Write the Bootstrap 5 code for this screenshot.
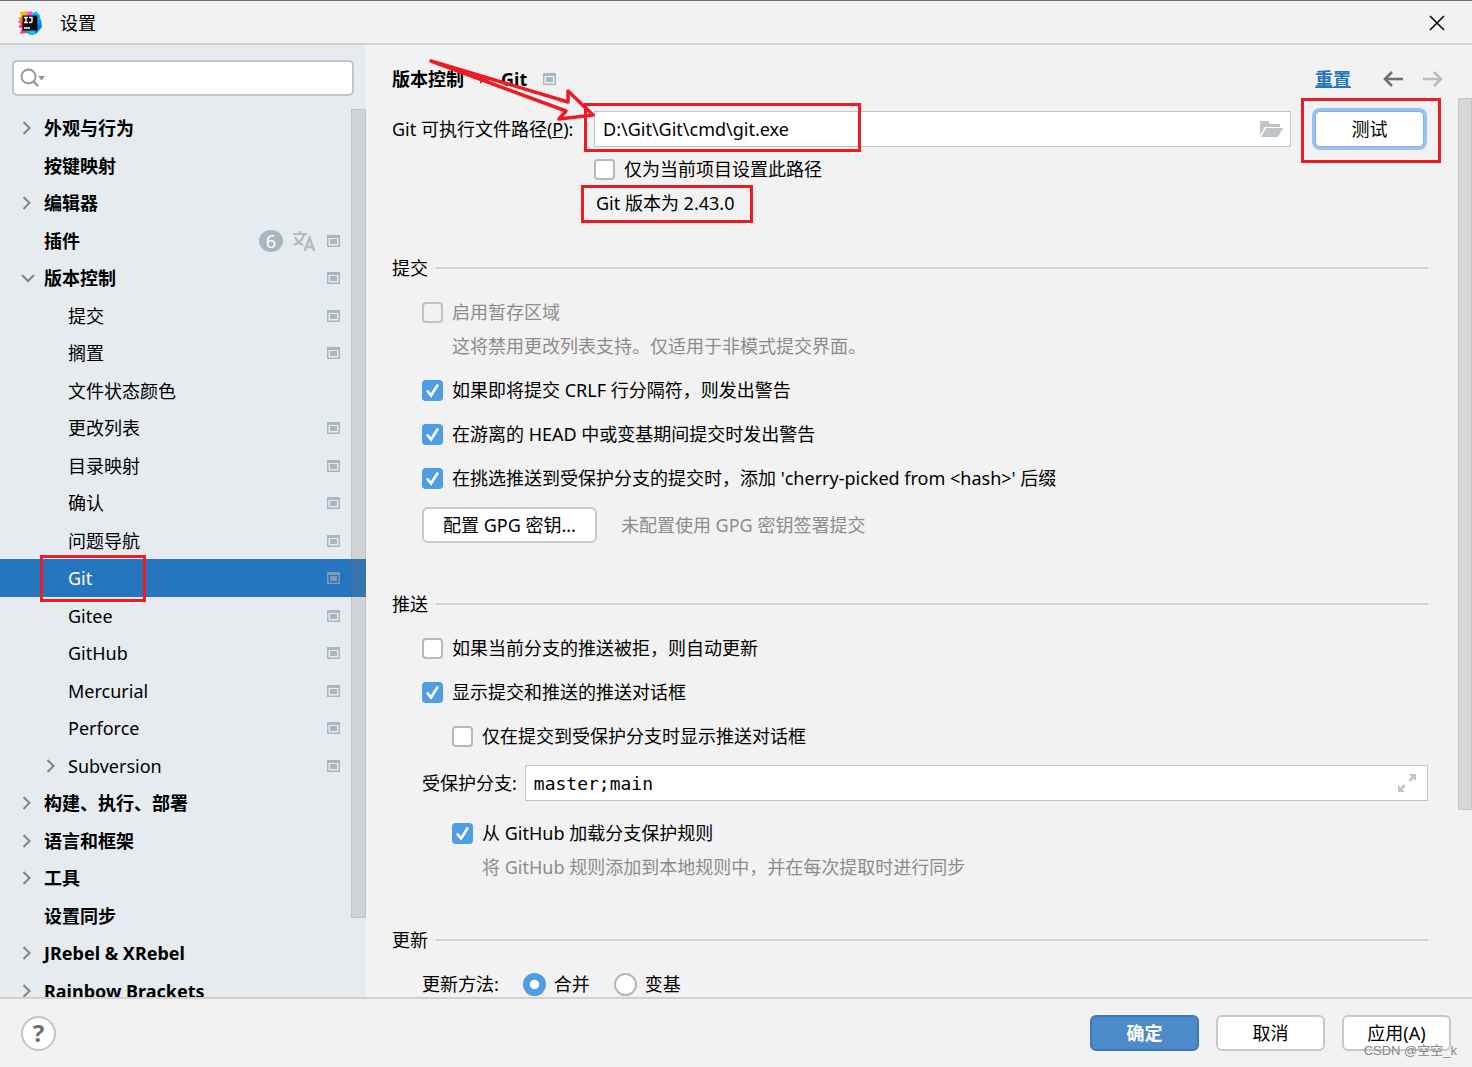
<!DOCTYPE html>
<html lang="zh-CN">
<head>
<meta charset="utf-8">
<meta name="viewport" content="width=device-width, initial-scale=1">
<title>设置</title>
<link href="https://cdn.jsdelivr.net/npm/bootstrap@5.3.0/dist/css/bootstrap.min.css" rel="stylesheet">
<style>
  body { background: #f2f2f2; color: #000; font-family: "Noto Sans", "Noto Sans CJK SC", sans-serif; font-size: 18px; line-height: 24px; }
  .title-bar { height: 45px; border-top: 1px solid #6b6b6b; border-bottom: 2px solid #d1d1d1; padding: 2px 26px 0 18px; gap: 18px; }
  .close-btn { line-height: 0; }
  .side-pane { width: 366px; background: #e6ebef; }
  .search-wrap { padding: 15px 12px 13px; }
  .search-wrap .form-control { height: 36px; border: 2px solid #c4c4c4; border-radius: 5px; padding-left: 44px; }
  .search-icon { left: 20px; top: 22px; }
  .tree-list { min-height: 900px; }
  .tree-list li { flex: 1 1 0; }
  .tree-item { padding: 1px 26px 0 19px; color: #000; }
  .tree-item .arrow-slot { width: 25px; line-height: 0; flex: none; }
  .tree-item.level-two { padding-left: 43px; }
  .tree-item.top-level { font-weight: 700; }
  .tree-item.selected { background: #2675bf; color: #fff; }
  .selected .proj-icon { color: #7d9bb8; }
  .proj-icon { width: 13px; height: 12px; color: #a9b6be; flex: none; }
  .update-count { width: 24px; height: 22px; border-radius: 50%; background: #a9b6be; color: #fff; font-weight: 400; line-height: 22px; }
  .scroll-thumb { position: absolute; background: rgba(115, 115, 115, .2); border: 1px solid rgba(90, 90, 90, .12); }
  .side-thumb { top: 64px; right: 0; width: 15px; height: 809px; }
  .page-thumb { top: 53px; right: 0; width: 14px; height: 712px; }
  .page-pane { padding: 0 44px 0 26px; }
  .page-head { height: 66px; margin-right: -15px; padding-top: 2px; }
  .reset-link { color: #2675bf; font-weight: 700; }
  .label-col { width: 202px; flex: none; white-space: nowrap; }
  .field { height: 36px; border: 1px solid #c4c4c4; border-radius: 0; padding: 0 8px; font-size: 18px; color: #000; }
  .field-mono { font-family: "DejaVu Sans Mono", monospace; }
  .field-icon { position: absolute; top: 9px; right: 8px; line-height: 0; }
  .tool-btn { min-width: 109px; height: 36px; border: 2px solid #c8c8c8; border-radius: 6px; background: #fff; color: #000; font-size: 18px; line-height: 24px; padding: 0 19px; }
  .tool-btn.is-default { background: #4d8ac9; border-color: #3f78b5; color: #fff; font-weight: 700; }
  .tool-btn.is-focused { border: 1px solid #87afda; box-shadow: 0 0 0 3px #97c3f3; border-radius: 5px; }
  .test-col { padding: 0 4px 0 24px; }
  .section-title { margin-top: 49px; gap: 8px; }
  .section-title.first { margin-top: 41px; }
  .section-title hr { height: 2px; margin: 0; border: 0; background: #d1d1d1; opacity: 1; }
  .opt { display: flex; align-items: center; gap: 9px; margin-top: 20px; }
  .opt .form-check-input { width: 21px; height: 21px; margin: 0; border: 2px solid #b8b8b8; background-color: #fff; flex: none; }
  .opt .form-check-input[type=checkbox] { border-radius: 4px; }
  .opt .form-check-input:checked { background-color: #4f9de3; border-color: #4f9de3; }
  .opt .form-check-input[type=checkbox]:checked { border-width: 0; background-image: url("data:image/svg+xml,%3csvg xmlns='http://www.w3.org/2000/svg' viewBox='0 0 21 21'%3e%3cpath d='M5 10.500l4 5 7-11' fill='none' stroke='%23fff' stroke-width='2.600'/%3e%3c/svg%3e"); }
  .opt .form-check-input:disabled { background-color: #f2f2f2; opacity: .8; }
  .opt .form-check-input[type=radio] { width: 23px; height: 23px; }
  .opt .form-check-input:disabled ~ label { opacity: 1; }
  .radio-row { gap: 8px; }
  .tight { margin-top: 10px; }
  .control-row { margin-top: 17px; }
  .group-body { padding-left: 30px; }
  .sub-level { padding-left: 30px; }
  .dim { color: #8c8c8c; }
  .version-note { padding-left: 2px; }
  .foot-bar { height: 70px; border-top: 2px solid #d1d1d1; padding: 0 21px; gap: 17px; }
  .help-btn { width: 35px; height: 35px; border: 2px solid #c4c4c4; border-radius: 50%; background: #fff; color: #6e6e6e; font-weight: 700; font-size: 24px; line-height: 30px; padding: 0; }
  .watermark { position: absolute; right: 15px; bottom: 6px; font-size: 13px; line-height: 20px; color: #888; font-family: "Liberation Sans", "Noto Sans CJK SC", sans-serif; }
  /* red annotations drawn over the dialog */
  .red-box { position: absolute; border: 3px solid #ed1c24; pointer-events: none; z-index: 3; }
  .box-tree { left: 40px; top: -4px; width: 106px; height: 47px; }
  .box-path { left: -10px; top: -8px; width: 277px; height: 49px; }
  .box-test { left: 10px; top: -13px; width: 140px; height: 65px; }
  .box-version { left: -15px; top: -6px; right: -19px; bottom: -8px; }
  .red-arrow { position: absolute; left: 36px; top: 10px; z-index: 4; pointer-events: none; }
</style>
<script src="https://cdn.jsdelivr.net/npm/bootstrap@5.3.0/dist/js/bootstrap.bundle.min.js"></script>
</head>
<body class="vh-100 overflow-hidden d-flex flex-column position-relative">
<svg class="d-none">
  <symbol id="proj" viewBox="0 0 13 12"><path fill="currentColor" fill-rule="evenodd" d="M0 0h13v12H0zM1.500 3v7.500h10V3z"/><path fill="currentColor" d="M3 4h7v5H3z"/></symbol>
  <symbol id="chev" viewBox="0 0 14 14"><path d="M4.500 1l6 6-6 6" fill="none" stroke="#808486" stroke-width="2"/></symbol>
  <symbol id="chev-down" viewBox="0 0 14 14"><path d="M2 4l6 6 6-6" fill="none" stroke="#808486" stroke-width="2"/></symbol>
</svg>

<header class="title-bar d-flex align-items-center flex-shrink-0">
  <svg width="24" height="24" viewBox="0 0 24 24" aria-hidden="true">
    <path fill="#fdb60d" d="M2 1l7-1 5 4-8 8-5-4 2-2z"/>
    <path fill="#ff318c" d="M0 11l5-5 6 3 3 12-12 2 2-6-4-1 3-3z"/>
    <path fill="#fc801d" d="M0 7l5-1 2 6-6-1 2-2z"/>
    <path fill="#ff45ed" d="M9 2l4-2 5 5-7 3z"/>
    <path fill="#087cfa" d="M17 1l4 2 2 7 1 6-5 6-6 2-6-3 8-8z"/>
    <path fill="#07c3f2" d="M14 3l4-3 4 5-1 8-7-4zM8 20l6 4 5-1-3-4z"/>
    <path fill="#150a0c" d="M4.500 4.500h15v15h-15z"/>
    <path fill="none" stroke="#fff" stroke-width="1.400" d="M6 6.500h4M8 6.500v5M6 11.500h4M11 6.500h3v4q0 1-1.500 1H11M6 17h6"/>
  </svg>
  <span>设置</span>
  <button type="button" class="close-btn btn p-0 border-0 ms-auto" aria-label="关闭"><svg width="18" height="18" viewBox="0 0 18 18"><path d="M2 2l14 14M16 2L2 16" stroke="#111" stroke-width="1.700"/></svg></button>
</header>

<div class="d-flex flex-grow-1 overflow-hidden">
  <aside class="side-pane flex-shrink-0 position-relative overflow-hidden">
    <div class="search-wrap position-relative">
      <input type="search" class="form-control" aria-label="搜索">
      <svg class="search-icon position-absolute" width="28" height="22" viewBox="0 0 28 22"><circle cx="8.500" cy="9.500" r="7" fill="none" stroke="#8c979e" stroke-width="1.800"/><path d="M13.500 14.500l4.500 4.500" stroke="#8c979e" stroke-width="2.400"/><path d="M18 9h7l-3.500 4.500z" fill="#8c979e"/></svg>
    </div>
    <ul class="tree-list list-unstyled d-flex flex-column mb-0">
      <li><a href="#" class="tree-item top-level h-100 d-flex align-items-center text-decoration-none"><span class="arrow-slot"><svg width="14" height="14"><use href="#chev"/></svg></span>外观与行为</a></li>
      <li><a href="#" class="tree-item top-level h-100 d-flex align-items-center text-decoration-none"><span class="arrow-slot"></span>按键映射</a></li>
      <li><a href="#" class="tree-item top-level h-100 d-flex align-items-center text-decoration-none"><span class="arrow-slot"><svg width="14" height="14"><use href="#chev"/></svg></span>编辑器</a></li>
      <li><a href="#" class="tree-item top-level h-100 d-flex align-items-center text-decoration-none"><span class="arrow-slot"></span>插件
        <span class="update-count text-center ms-auto">6</span>
        <svg class="mx-2 px-0" width="28" height="22" viewBox="0 0 28 22" fill="none" stroke="#b5bcc0" stroke-width="2.200"><path d="M2 4h14M9 1v3M4 7q3 6 8 8M13 4q-1 7-10 11"/><path d="M13.500 21l5-13 5 13M15.500 17h6.500" stroke-width="2.400"/></svg>
        <svg class="proj-icon"><use href="#proj"/></svg></a></li>
      <li><a href="#" class="tree-item top-level h-100 d-flex align-items-center text-decoration-none"><span class="arrow-slot"><svg width="16" height="14"><use href="#chev-down"/></svg></span>版本控制<svg class="proj-icon ms-auto"><use href="#proj"/></svg></a></li>
      <li><a href="#" class="tree-item level-two h-100 d-flex align-items-center text-decoration-none"><span class="arrow-slot"></span>提交<svg class="proj-icon ms-auto"><use href="#proj"/></svg></a></li>
      <li><a href="#" class="tree-item level-two h-100 d-flex align-items-center text-decoration-none"><span class="arrow-slot"></span>搁置<svg class="proj-icon ms-auto"><use href="#proj"/></svg></a></li>
      <li><a href="#" class="tree-item level-two h-100 d-flex align-items-center text-decoration-none"><span class="arrow-slot"></span>文件状态颜色</a></li>
      <li><a href="#" class="tree-item level-two h-100 d-flex align-items-center text-decoration-none"><span class="arrow-slot"></span>更改列表<svg class="proj-icon ms-auto"><use href="#proj"/></svg></a></li>
      <li><a href="#" class="tree-item level-two h-100 d-flex align-items-center text-decoration-none"><span class="arrow-slot"></span>目录映射<svg class="proj-icon ms-auto"><use href="#proj"/></svg></a></li>
      <li><a href="#" class="tree-item level-two h-100 d-flex align-items-center text-decoration-none"><span class="arrow-slot"></span>确认<svg class="proj-icon ms-auto"><use href="#proj"/></svg></a></li>
      <li><a href="#" class="tree-item level-two h-100 d-flex align-items-center text-decoration-none"><span class="arrow-slot"></span>问题导航<svg class="proj-icon ms-auto"><use href="#proj"/></svg></a></li>
      <li class="position-relative"><a href="#" class="tree-item level-two selected h-100 d-flex align-items-center text-decoration-none" aria-current="page"><span class="arrow-slot"></span>Git<svg class="proj-icon ms-auto"><use href="#proj"/></svg></a><span class="red-box box-tree"></span></li>
      <li><a href="#" class="tree-item level-two h-100 d-flex align-items-center text-decoration-none"><span class="arrow-slot"></span>Gitee<svg class="proj-icon ms-auto"><use href="#proj"/></svg></a></li>
      <li><a href="#" class="tree-item level-two h-100 d-flex align-items-center text-decoration-none"><span class="arrow-slot"></span>GitHub<svg class="proj-icon ms-auto"><use href="#proj"/></svg></a></li>
      <li><a href="#" class="tree-item level-two h-100 d-flex align-items-center text-decoration-none"><span class="arrow-slot"></span>Mercurial<svg class="proj-icon ms-auto"><use href="#proj"/></svg></a></li>
      <li><a href="#" class="tree-item level-two h-100 d-flex align-items-center text-decoration-none"><span class="arrow-slot"></span>Perforce<svg class="proj-icon ms-auto"><use href="#proj"/></svg></a></li>
      <li><a href="#" class="tree-item level-two h-100 d-flex align-items-center text-decoration-none"><span class="arrow-slot"><svg width="14" height="14"><use href="#chev"/></svg></span>Subversion<svg class="proj-icon ms-auto"><use href="#proj"/></svg></a></li>
      <li><a href="#" class="tree-item top-level h-100 d-flex align-items-center text-decoration-none"><span class="arrow-slot"><svg width="14" height="14"><use href="#chev"/></svg></span>构建、执行、部署</a></li>
      <li><a href="#" class="tree-item top-level h-100 d-flex align-items-center text-decoration-none"><span class="arrow-slot"><svg width="14" height="14"><use href="#chev"/></svg></span>语言和框架</a></li>
      <li><a href="#" class="tree-item top-level h-100 d-flex align-items-center text-decoration-none"><span class="arrow-slot"><svg width="14" height="14"><use href="#chev"/></svg></span>工具</a></li>
      <li><a href="#" class="tree-item top-level h-100 d-flex align-items-center text-decoration-none"><span class="arrow-slot"></span>设置同步</a></li>
      <li><a href="#" class="tree-item top-level h-100 d-flex align-items-center text-decoration-none"><span class="arrow-slot"><svg width="14" height="14"><use href="#chev"/></svg></span>JRebel &amp; XRebel</a></li>
      <li><a href="#" class="tree-item top-level h-100 d-flex align-items-center text-decoration-none"><span class="arrow-slot"><svg width="14" height="14"><use href="#chev"/></svg></span>Rainbow Brackets</a></li>
    </ul>
    <div class="scroll-thumb side-thumb"></div>
  </aside>

  <main class="page-pane flex-grow-1 position-relative overflow-hidden">
    <div class="page-head d-flex align-items-center position-relative">
      <strong>版本控制</strong>
      <svg class="mx-3" width="5" height="10" viewBox="0 0 5 10"><path d="M0 1l4 4-4 4" fill="none" stroke="#333" stroke-width="1.500"/></svg>
      <strong>Git</strong>
      <svg class="proj-icon ms-3 me-0"><use href="#proj"/></svg>
      <a href="#" class="reset-link ms-auto">重置</a>
      <button type="button" class="btn p-0 border-0 lh-1 d-flex ms-4 ps-2" aria-label="后退"><svg width="20" height="16" viewBox="0 0 20 16"><path d="M20 8H2M9 1L2 8l7 7" fill="none" stroke="#6e6e6e" stroke-width="2.500"/></svg></button>
      <button type="button" class="btn p-0 border-0 lh-1 d-flex ms-3 ps-1" aria-label="前进"><svg width="20" height="16" viewBox="0 0 20 16"><path d="M0 8h18M11 1l7 7-7 7" fill="none" stroke="#bdbdbd" stroke-width="2.500"/></svg></button>
      <svg class="red-arrow" width="170" height="66" viewBox="0 0 170 66" fill="none" stroke="#ed1c24" stroke-width="3.500" stroke-linejoin="round" stroke-linecap="round"><path d="M3 6L140 47v-11l25 24-34 4 7-8z"/><path d="M3 6l60 22-10-8z" fill="#ed1c24" stroke-width="1"/></svg>
    </div>

    <div class="d-flex align-items-center">
      <label class="label-col" for="git-path">Git 可执行文件路径(<u>P</u>):</label>
      <div class="position-relative flex-grow-1">
        <input id="git-path" type="text" class="form-control field" value="D:\Git\Git\cmd\git.exe">
        <span class="field-icon"><svg width="24" height="18" viewBox="0 0 24 18" fill="#bfc5c9"><path d="M1 1h8l2 3h10v3H6L1 15z"/><path d="M7 8h17l-5 9H2z"/></svg></span>
        <span class="red-box box-path"></span>
      </div>
      <div class="test-col position-relative">
        <button type="button" class="tool-btn btn is-focused">测试</button>
        <span class="red-box box-test"></span>
      </div>
    </div>
    <div class="d-flex">
      <div class="label-col"></div>
      <div>
        <div class="opt tight"><input class="form-check-input" type="checkbox" id="only-project"><label for="only-project">仅为当前项目设置此路径</label></div>
        <div class="version-note tight"><span class="position-relative d-inline-block">Git 版本为 2.43.0<span class="red-box box-version"></span></span></div>
      </div>
    </div>

    <section>
      <div class="section-title first d-flex align-items-center"><span>提交</span><hr class="flex-grow-1"></div>
      <div class="group-body">
        <div class="opt"><input class="form-check-input" type="checkbox" id="staging" disabled><label class="dim" for="staging">启用暂存区域</label></div>
        <div class="sub-level tight dim">这将禁用更改列表支持。仅适用于非模式提交界面。</div>
        <div class="opt"><input class="form-check-input" type="checkbox" id="crlf" checked><label for="crlf">如果即将提交 CRLF 行分隔符，则发出警告</label></div>
        <div class="opt"><input class="form-check-input" type="checkbox" id="head" checked><label for="head">在游离的 HEAD 中或变基期间提交时发出警告</label></div>
        <div class="opt"><input class="form-check-input" type="checkbox" id="cherry" checked><label for="cherry">在挑选推送到受保护分支的提交时，添加 'cherry-picked from &lt;hash&gt;' 后缀</label></div>
        <div class="control-row d-flex align-items-center gap-4">
          <button type="button" class="tool-btn btn">配置 GPG 密钥...</button>
          <span class="dim">未配置使用 GPG 密钥签署提交</span>
        </div>
      </div>
    </section>

    <section>
      <div class="section-title d-flex align-items-center"><span>推送</span><hr class="flex-grow-1"></div>
      <div class="group-body">
        <div class="opt"><input class="form-check-input" type="checkbox" id="auto-update"><label for="auto-update">如果当前分支的推送被拒，则自动更新</label></div>
        <div class="opt"><input class="form-check-input" type="checkbox" id="push-dialog" checked><label for="push-dialog">显示提交和推送的推送对话框</label></div>
        <div class="opt sub-level"><input class="form-check-input" type="checkbox" id="protected-only"><label for="protected-only">仅在提交到受保护分支时显示推送对话框</label></div>
        <div class="control-row d-flex align-items-center gap-2">
          <label for="branches">受保护分支:</label>
          <div class="position-relative flex-grow-1">
            <input id="branches" type="text" class="form-control field field-mono" value="master;main">
            <span class="field-icon pe-1"><svg width="18" height="18" viewBox="0 0 18 18" fill="#bfc5c9"><path d="M11 0h7v7l-2.500-2.500-3 3.500-2-2 3-3.500zM0 11l2.500 2.500 3-3.500 2 2-3 3.500L7 18H0z"/></svg></span>
          </div>
        </div>
        <div class="opt sub-level"><input class="form-check-input" type="checkbox" id="gh-rules" checked><label for="gh-rules">从 GitHub 加载分支保护规则</label></div>
        <div class="sub-level tight dim"><div class="sub-level">将 GitHub 规则添加到本地规则中，并在每次提取时进行同步</div></div>
      </div>
    </section>

    <section>
      <div class="section-title d-flex align-items-center"><span>更新</span><hr class="flex-grow-1"></div>
      <div class="group-body opt radio-row">
        <span>更新方法:</span>
        <input class="form-check-input ms-3" type="radio" name="update" id="merge" checked><label for="merge">合并</label>
        <input class="form-check-input ms-3" type="radio" name="update" id="rebase"><label for="rebase">变基</label>
      </div>
    </section>
    <div class="scroll-thumb page-thumb"></div>
  </main>
</div>

<footer class="foot-bar d-flex align-items-center flex-shrink-0 position-relative">
  <button type="button" class="help-btn me-auto" aria-label="帮助">?</button>
  <button type="button" class="tool-btn btn is-default">确定</button>
  <button type="button" class="tool-btn btn">取消</button>
  <button type="button" class="tool-btn btn">应用(A)</button>
  <span class="watermark">CSDN @空空_k</span>
</footer>
</body>
</html>
